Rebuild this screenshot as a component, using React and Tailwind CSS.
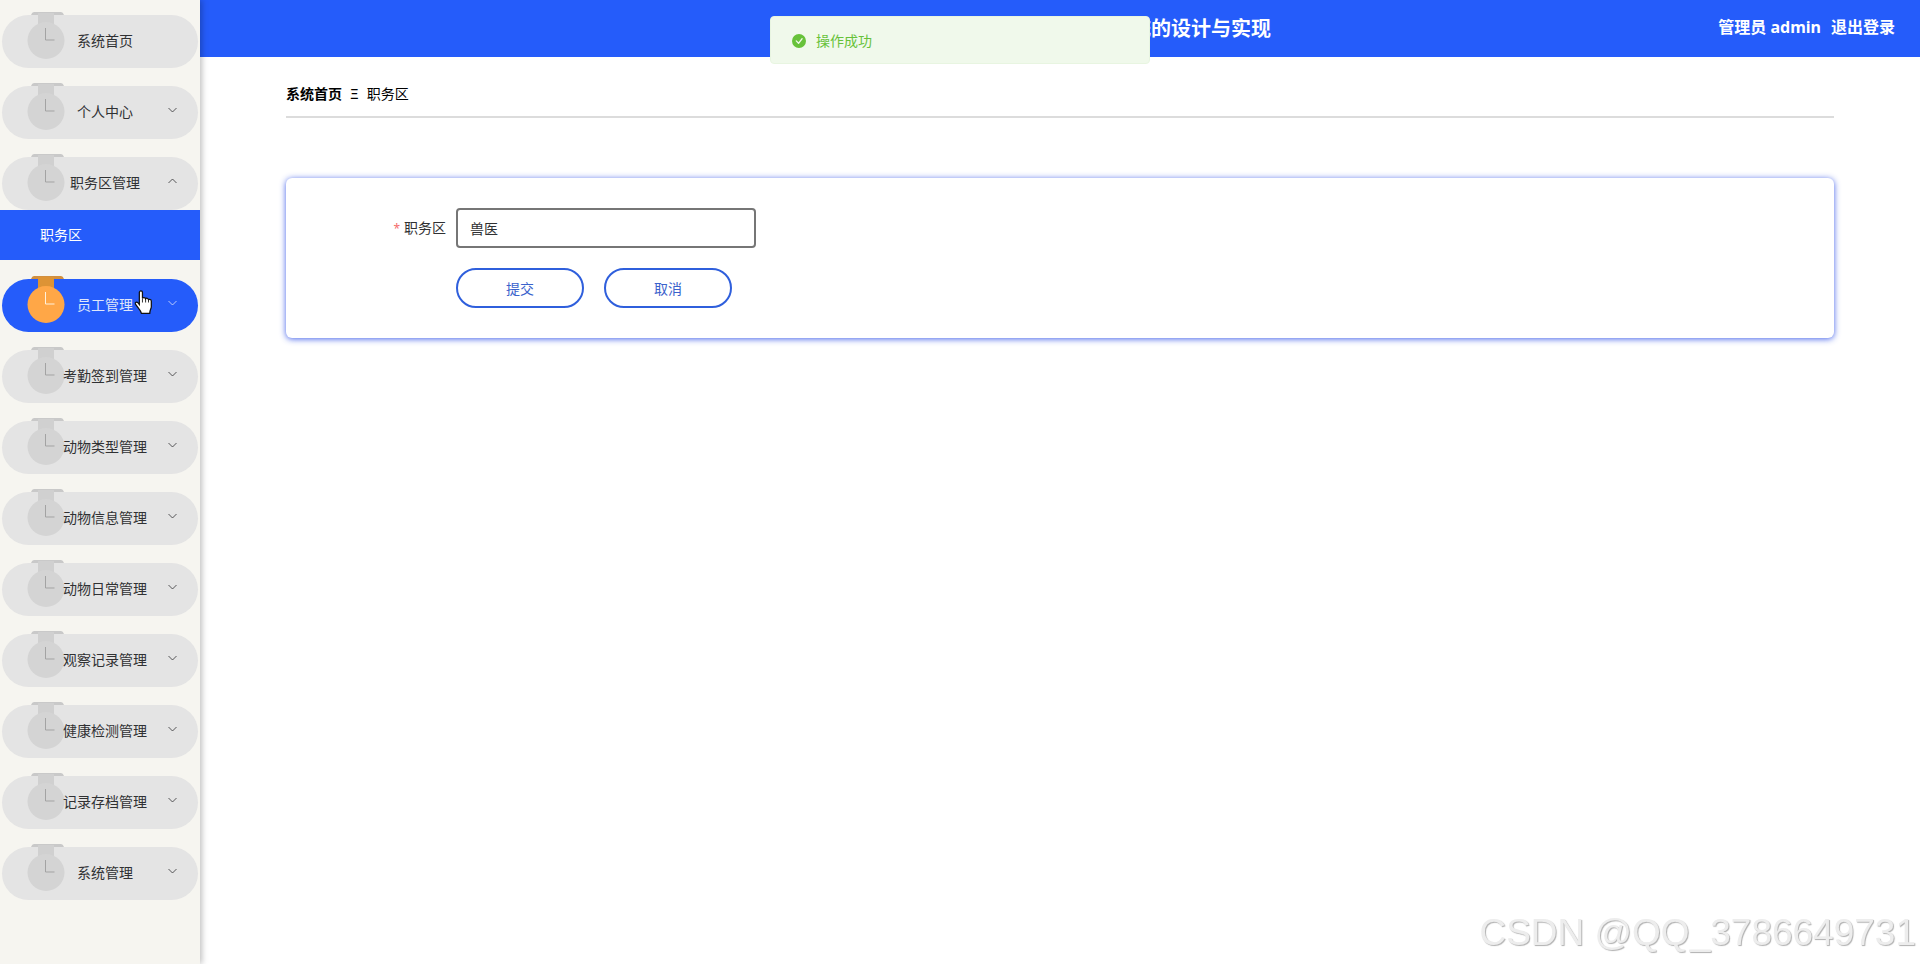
import React, { useState } from 'react';
import { BsCheckCircleFill } from 'react-icons/bs';

const menus = [
  { name: '系统首页', leaf: true },
  { name: '个人中心' },
  { name: '职务区管理', open: true, children: ['职务区'] },
  { name: '员工管理', hover: true },
  { name: '考勤签到管理' },
  { name: '动物类型管理' },
  { name: '动物信息管理' },
  { name: '动物日常管理' },
  { name: '观察记录管理' },
  { name: '健康检测管理' },
  { name: '记录存档管理' },
  { name: '系统管理' },
];

// Stopwatch that hangs over the top edge of every menu pill
function WatchIcon({ active }) {
  return (
    <svg className="absolute left-[25px] -top-[3px]" width="38" height="48" viewBox="0 0 38 48" aria-hidden="true">
      <path d="M7 0h27q2 0 3 3H4q1-3 3-3z" fill={active ? '#d28f3e' : '#c9c9c9'} />
      <path d="M11 1h16v16H11z" fill={active ? '#dd9335' : '#d0d0d0'} />
      <circle cx="19" cy="28.500" r="18.5" fill={active ? '#ffa747' : '#d4d4d4'} />
      <path d="M18.500 16v12h9" fill="none" stroke={active ? '#fff1dc' : '#a3a3a3'} strokeWidth="1" />
    </svg>
  );
}

function Arrow({ up }) {
  return (
    <svg className="absolute right-[21px] top-[21px]" width="9" height="6" viewBox="0 0 9 6" fill="none" stroke="currentColor" strokeWidth="0.8" aria-hidden="true">
      <path d={up ? 'M.5 5l4-4 4 4' : 'M.5 1l4 4 4-4'} />
    </svg>
  );
}

function HandCursor() {
  return (
    <svg className="absolute left-[132px] top-[11px]" width="19" height="25" viewBox="0 0 18 24" aria-hidden="true">
      <path
        d="M5 14V2.500C5 .4 8 .4 8 2.500V8c.5-1.200 2.700-1 3 .5.700-1 2.500-.7 2.800.8 1-.8 2.700-.2 2.700 1.400V16c0 2-1.500 3-1.500 6.500H7C6.500 19.500 3.500 17 1.300 13.500c-.8-1.500 1.200-2.500 2.200-1.300z"
        fill="#fff"
        stroke="#111"
        strokeWidth="1.200"
      />
      <path d="M8 8v4M11 8.500V12M13.800 9.500V12" stroke="#111" strokeWidth="0.8" />
    </svg>
  );
}

function MenuItem({ item }) {
  return (
    <li>
      <div className="relative mx-0.5">
        <button
          type="button"
          className={`relative flex h-[53px] w-full items-center justify-center rounded-full pb-0.5 pl-2.5 text-sm ${
            item.hover ? 'bg-[#255cfa] text-[#dfe6fb]' : 'bg-[#e4e4e4] text-[#303133]'
          }`}
        >
          <WatchIcon active={item.hover} />
          <span className="relative">{item.name}</span>
          {!item.leaf && <Arrow up={item.open} />}
        </button>
        {item.hover && <HandCursor />}
      </div>
      {item.children && (
        <ul className="mb-px">
          {item.children.map((child) => (
            <li key={child}>
              <a href="#" className="flex h-[50px] items-center bg-[#255cfa] pl-10 text-sm text-white">
                {child}
              </a>
            </li>
          ))}
        </ul>
      )}
    </li>
  );
}

export default function App() {
  const [post, setPost] = useState('兽医');

  return (
    <div className="flex min-h-screen bg-white font-['Noto_Sans','Noto_Sans_CJK_SC',sans-serif] text-[#303133]">
      {/* Sidebar */}
      <aside className="relative w-[200px] shrink-0 bg-[#f6f5f0] pt-[15px] shadow-[2px_0_6px_rgba(0,0,0,0.25)]">
        <ul className="flex flex-col gap-[18px]">
          {menus.map((item) => (
            <MenuItem key={item.name} item={item} />
          ))}
        </ul>
      </aside>

      <div className="min-w-0 flex-1">
        {/* Header */}
        <header className="grid h-[57px] grid-cols-[1fr_422px_1fr] items-center bg-[#255cfa] text-white">
          <h1 className="col-start-2 text-right text-xl font-bold">系统的设计与实现</h1>
          <div className="flex justify-end gap-2.5 pr-[25px] pb-1 text-base font-bold">
            <span>管理员 admin</span>
            <a href="#">退出登录</a>
          </div>
        </header>

        <main className="px-[5%]">
          <nav className="flex h-[61px] items-center gap-2 border-b-2 border-[#dcdcdc] pt-3.5 text-sm text-black">
            <a href="#" className="font-bold">系统首页</a>
            <span>Ξ</span>
            <span>职务区</span>
          </nav>

          <form
            className="mt-[60px] rounded-md p-[30px] text-sm shadow-[0_1px_6px_rgba(37,72,230,0.85)]"
            onSubmit={(e) => e.preventDefault()}
          >
            <div className="flex items-center">
              <label htmlFor="post" className="w-[140px] pr-2.5 text-right">
                <span className="mr-1 text-xs text-[#f56c6c]">*</span>职务区
              </label>
              <input
                id="post"
                className="h-10 w-[300px] rounded border-2 border-[#767676] px-3 outline-none"
                value={post}
                onChange={(e) => setPost(e.target.value)}
              />
            </div>
            <div className="mt-5 flex gap-5 pl-[140px]">
              <button type="submit" className="h-10 w-32 rounded-full border-2 border-[#2f5fdc] pt-0.5 text-[#3a62cc]">
                提交
              </button>
              <button type="button" className="h-10 w-32 rounded-full border-2 border-[#2f5fdc] pt-0.5 text-[#3a62cc]">
                取消
              </button>
            </div>
          </form>
        </main>
      </div>

      {/* Success message */}
      <div
        role="alert"
        className="fixed left-1/2 top-4 flex h-12 w-[380px] -translate-x-1/2 items-center gap-2.5 rounded border border-[#e8f5e1] bg-[#f0f9eb] pt-0.5 pl-[21px] pr-5 text-sm text-[#67c23a]"
      >
        <BsCheckCircleFill className="size-3.5" />
        <p>操作成功</p>
      </div>

      <p className="fixed bottom-1.5 right-1 font-['Liberation_Sans',sans-serif] text-[37px] leading-[50px] text-[#ededed] [text-shadow:1px_1px_1px_#b0b0b0]">
        CSDN @QQ_3786649731
      </p>
    </div>
  );
}
